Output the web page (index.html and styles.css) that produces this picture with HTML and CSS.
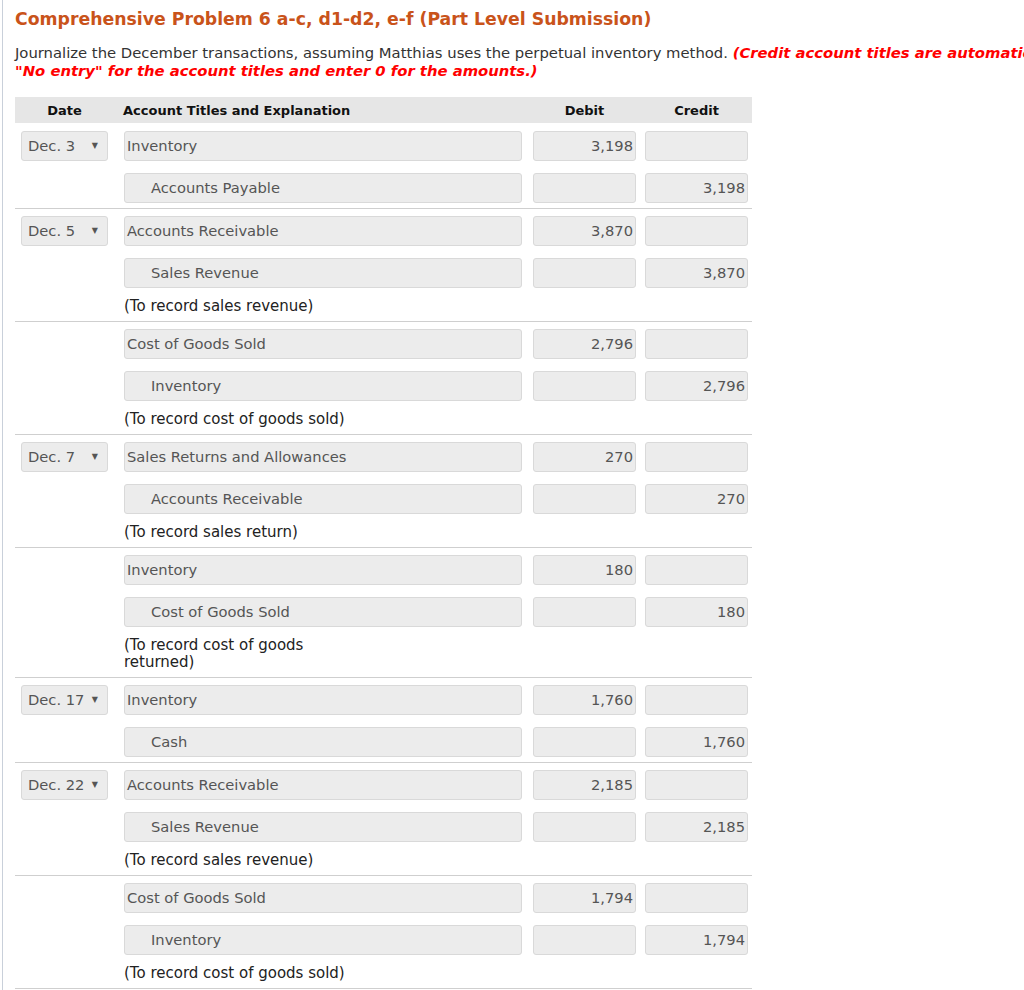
FILE: index.html
```html
<!DOCTYPE html>
<html>
<head>
<meta charset="utf-8">
<link rel="stylesheet" href="styles.css">
</head>
<body>
<div class="page">
  <h1 class="title">Comprehensive Problem 6 a-c, d1-d2, e-f (Part Level Submission)</h1>
  <div class="instr">
    <div class="line">Journalize the December transactions, assuming Matthias uses the perpetual inventory method. <span class="red">(Credit account titles are automatically indented when amount is entered. Do not indent manually. If no entry is required, select</span></div>
    <div class="line red">"No entry" for the account titles and enter 0 for the amounts.)</div>
  </div>

  <div class="journal">
    <div class="head">
      <div class="h-date">Date</div>
      <div class="h-acct">Account Titles and Explanation</div>
      <div class="h-num">Debit</div>
      <div class="h-num">Credit</div>
    </div>

    <div class="group first">
      <div class="row">
        <div class="cell"><div class="sel"><span>Dec. 3</span><span class="arr">▼</span></div></div>
        <div class="cell"><div class="box acct">Inventory</div></div>
        <div class="cell"><div class="box num">3,198</div></div>
        <div class="cell"><div class="box num"></div></div>
      </div>
      <div class="row">
        <div class="cell"></div>
        <div class="cell"><div class="box acct cr">Accounts Payable</div></div>
        <div class="cell"><div class="box num"></div></div>
        <div class="cell"><div class="box num">3,198</div></div>
      </div>
    </div>

    <div class="group">
      <div class="row">
        <div class="cell"><div class="sel"><span>Dec. 5</span><span class="arr">▼</span></div></div>
        <div class="cell"><div class="box acct">Accounts Receivable</div></div>
        <div class="cell"><div class="box num">3,870</div></div>
        <div class="cell"><div class="box num"></div></div>
      </div>
      <div class="row">
        <div class="cell"></div>
        <div class="cell"><div class="box acct cr">Sales Revenue</div></div>
        <div class="cell"><div class="box num"></div></div>
        <div class="cell"><div class="box num">3,870</div></div>
      </div>
      <div class="expl">(To record sales revenue)</div>
    </div>

    <div class="group">
      <div class="row">
        <div class="cell"></div>
        <div class="cell"><div class="box acct">Cost of Goods Sold</div></div>
        <div class="cell"><div class="box num">2,796</div></div>
        <div class="cell"><div class="box num"></div></div>
      </div>
      <div class="row">
        <div class="cell"></div>
        <div class="cell"><div class="box acct cr">Inventory</div></div>
        <div class="cell"><div class="box num"></div></div>
        <div class="cell"><div class="box num">2,796</div></div>
      </div>
      <div class="expl">(To record cost of goods sold)</div>
    </div>

    <div class="group">
      <div class="row">
        <div class="cell"><div class="sel"><span>Dec. 7</span><span class="arr">▼</span></div></div>
        <div class="cell"><div class="box acct">Sales Returns and Allowances</div></div>
        <div class="cell"><div class="box num">270</div></div>
        <div class="cell"><div class="box num"></div></div>
      </div>
      <div class="row">
        <div class="cell"></div>
        <div class="cell"><div class="box acct cr">Accounts Receivable</div></div>
        <div class="cell"><div class="box num"></div></div>
        <div class="cell"><div class="box num">270</div></div>
      </div>
      <div class="expl">(To record sales return)</div>
    </div>

    <div class="group">
      <div class="row">
        <div class="cell"></div>
        <div class="cell"><div class="box acct">Inventory</div></div>
        <div class="cell"><div class="box num">180</div></div>
        <div class="cell"><div class="box num"></div></div>
      </div>
      <div class="row">
        <div class="cell"></div>
        <div class="cell"><div class="box acct cr">Cost of Goods Sold</div></div>
        <div class="cell"><div class="box num"></div></div>
        <div class="cell"><div class="box num">180</div></div>
      </div>
      <div class="expl">(To record cost of goods returned)</div>
    </div>

    <div class="group">
      <div class="row">
        <div class="cell"><div class="sel"><span>Dec. 17</span><span class="arr">▼</span></div></div>
        <div class="cell"><div class="box acct">Inventory</div></div>
        <div class="cell"><div class="box num">1,760</div></div>
        <div class="cell"><div class="box num"></div></div>
      </div>
      <div class="row">
        <div class="cell"></div>
        <div class="cell"><div class="box acct cr">Cash</div></div>
        <div class="cell"><div class="box num"></div></div>
        <div class="cell"><div class="box num">1,760</div></div>
      </div>
    </div>

    <div class="group">
      <div class="row">
        <div class="cell"><div class="sel"><span>Dec. 22</span><span class="arr">▼</span></div></div>
        <div class="cell"><div class="box acct">Accounts Receivable</div></div>
        <div class="cell"><div class="box num">2,185</div></div>
        <div class="cell"><div class="box num"></div></div>
      </div>
      <div class="row">
        <div class="cell"></div>
        <div class="cell"><div class="box acct cr">Sales Revenue</div></div>
        <div class="cell"><div class="box num"></div></div>
        <div class="cell"><div class="box num">2,185</div></div>
      </div>
      <div class="expl">(To record sales revenue)</div>
    </div>

    <div class="group">
      <div class="row">
        <div class="cell"></div>
        <div class="cell"><div class="box acct">Cost of Goods Sold</div></div>
        <div class="cell"><div class="box num">1,794</div></div>
        <div class="cell"><div class="box num"></div></div>
      </div>
      <div class="row">
        <div class="cell"></div>
        <div class="cell"><div class="box acct cr">Inventory</div></div>
        <div class="cell"><div class="box num"></div></div>
        <div class="cell"><div class="box num">1,794</div></div>
      </div>
      <div class="expl">(To record cost of goods sold)</div>
    </div>
  </div>
</div>
</body>
</html>
```
FILE: styles.css
```css
html, body {
  margin: 0;
  padding: 0;
  background: #fff;
  overflow: hidden;
}
body {
  font-family: "DejaVu Sans", Verdana, sans-serif;
  font-size: 14px;
  color: #222;
}
.page {
  margin-left: 2px;
  border-left: 1px solid #c9d0da;
  padding-left: 12px;
  padding-top: 8px;
  min-height: 1100px;
}
.title {
  margin: 0;
  font-size: 17.3px;
  font-weight: bold;
  color: #c9531a;
  line-height: 22px;
  white-space: nowrap;
}
.instr {
  margin-top: 14px;
  line-height: 18px;
  font-size: 14.8px;
  color: #333;
}
.instr .line {
  white-space: nowrap;
}
.red {
  color: #f00;
  font-weight: bold;
  font-style: italic;
}
.journal {
  margin-top: 17px;
  width: 737px;
}
.head {
  display: grid;
  grid-template-columns: 103px 409px 112px 107px;
  padding-left: 6px;
  height: 26px;
  align-items: center;
  background: #e6e6e6;
  font-weight: bold;
  font-size: 13px;
  color: #111;
}
.h-date {
  width: 87px;
  text-align: center;
}
.h-acct {
  margin-left: -1px;
}
.h-num {
  width: 103px;
  text-align: center;
}
.group {
  border-bottom: 1px solid #cfcfcf;
  padding: 7px 0 5px;
  display: flex;
  flex-direction: column;
  gap: 12px;
}
.group.first {
  padding-top: 8px;
}
.row {
  display: grid;
  grid-template-columns: 103px 409px 112px 107px;
  padding-left: 6px;
  height: 30px;
}
.sel, .box {
  box-sizing: border-box;
  height: 30px;
  background: #ececec;
  border: 1px solid #d9d9d9;
  border-radius: 3px;
  color: #555;
  font-size: 14.7px;
  line-height: 28px;
  white-space: nowrap;
  overflow: hidden;
}
.sel {
  width: 87px;
  padding-left: 6px;
  display: flex;
  justify-content: space-between;
  padding-right: 9px;
}
.arr {
  font-size: 8px;
  color: #555;
}
.box.acct {
  width: 398px;
  padding-left: 2px;
}
.box.acct.cr {
  padding-left: 26px;
}
.box.num {
  width: 103px;
  text-align: right;
  padding-right: 2px;
}
.expl {
  margin-top: -2px;
  margin-bottom: 1px;
  padding-left: 109px;
  width: 232px;
  line-height: 17px;
  font-size: 15px;
  color: #222;
}
```
